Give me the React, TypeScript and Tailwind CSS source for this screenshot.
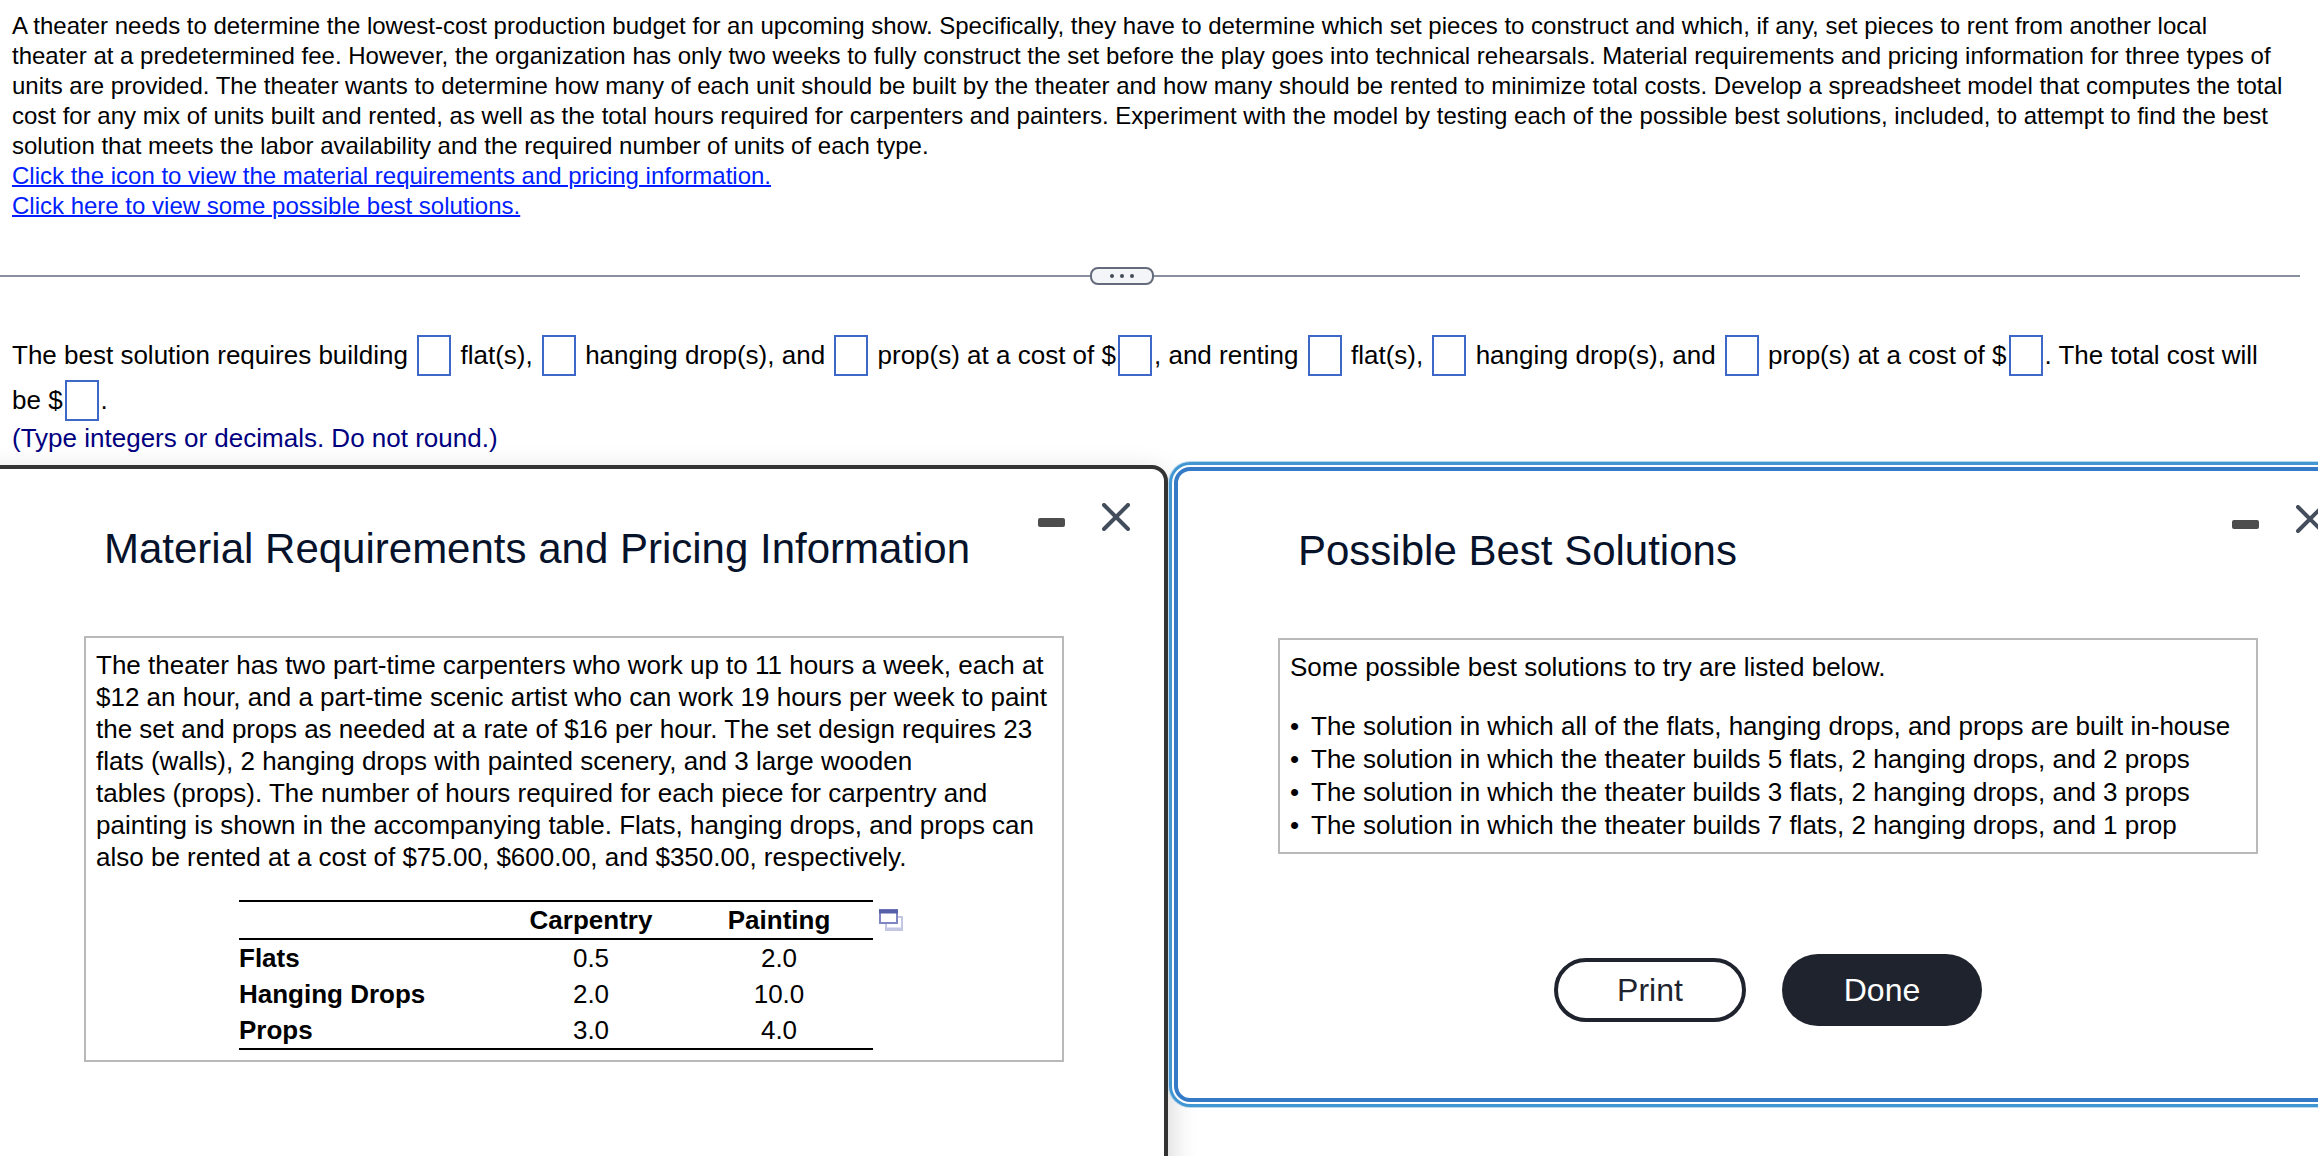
import React, { useState } from 'react';

const SOLUTIONS = [
    'The solution in which all of the flats, hanging drops, and props are built in-house',
    'The solution in which the theater builds 5 flats, 2 hanging drops, and 2 props',
    'The solution in which the theater builds 3 flats, 2 hanging drops, and 3 props',
    'The solution in which the theater builds 7 flats, 2 hanging drops, and 1 prop',
];

const HOURS = [
    { name: 'Flats', carpentry: '0.5', painting: '2.0' },
    { name: 'Hanging Drops', carpentry: '2.0', painting: '10.0' },
    { name: 'Props', carpentry: '3.0', painting: '4.0' },
];

const Blank: React.FC<{ label: string }> = ({ label }) => {
    const [value, setValue] = useState('');

    return (
        <input
            type="text"
            aria-label={label}
            className="mx-[2px] h-[41px] w-[34px] border-2 border-[#3d68c8] bg-white text-center outline-none"
            value={value}
            onChange={(e) => setValue(e.target.value)}
        />
    );
};

interface DialogProps {
    title: string;
    className: string;
    children: React.ReactNode;
}

const Dialog: React.FC<DialogProps> = ({ title, className, children }) => (
    <section role="dialog" aria-label={title} className={`w-[calc(50%+19px)] shrink-0 rounded-2xl border-4 bg-white ${className}`}>
        <header className="flex h-[167px] items-start justify-between pt-[34px] pr-[34px] pl-[120px]">
            <h2 className="mt-[22px] text-[42px] leading-[48px] text-[#07122b]">{title}</h2>
            <div className="flex gap-[37px]">
                <button type="button" aria-label="Minimize" className="flex h-[28px] w-[27px] items-center pt-[11px]">
                    <span className="h-[9px] w-full rounded-[2px] bg-[#4d4d4d]" />
                </button>
                <button type="button" aria-label="Close" className="h-[28px] w-[28px]">
                    <svg viewBox="0 0 28 28" className="h-full w-full" fill="none" stroke="#434d5b" strokeWidth="4" strokeLinecap="round">
                        <path d="M2 2 26 26M26 2 2 26" />
                    </svg>
                </button>
            </div>
        </header>
        <div className="px-[100px]">{children}</div>
    </section>
);

const HoursTable: React.FC = () => (
    <div className="mt-[27px] flex items-start justify-center">
        <table className="w-[634px] table-fixed border-separate border-spacing-0 leading-[36px]">
            <thead>
                <tr>
                    <td className="w-[258px] border-y-2 border-black p-0" />
                    <th scope="col" className="border-y-2 border-black p-0 text-center font-bold">Carpentry</th>
                    <th scope="col" className="border-y-2 border-black p-0 text-center font-bold">Painting</th>
                </tr>
            </thead>
            <tbody className="[&>tr:last-child>*]:border-b-2 [&>tr:last-child>*]:border-black">
                {HOURS.map((row) => (
                    <tr key={row.name}>
                        <th scope="row" className="p-0 text-left font-bold">{row.name}</th>
                        <td className="p-0 text-center">{row.carpentry}</td>
                        <td className="p-0 text-center">{row.painting}</td>
                    </tr>
                ))}
            </tbody>
        </table>
        <button type="button" aria-label="Open table in new window" className="mx-[6px] mt-[9px]">
            <svg viewBox="0 0 24 22" className="h-[22px] w-[24px]">
                <rect x="7" y="8" width="16" height="13" fill="#fff" stroke="#c3c7e4" strokeWidth="2" />
                <path d="M8 20h15" stroke="#c3c7e4" strokeWidth="3" />
                <rect x="1" y="1" width="17" height="13" fill="#fff" stroke="#7f86c2" strokeWidth="2" />
                <path d="M0 2.5h19" stroke="#5560a8" strokeWidth="4" />
            </svg>
        </button>
    </div>
);

export default function App() {
    return (
        <main className="flex h-screen flex-col overflow-hidden bg-white font-['Liberation_Sans',Arial,sans-serif] text-[26px] text-black">
            <div className="pt-[11px] pr-[30px] pl-[12px] text-[24px] leading-[30px]">
                <p>
                    A theater needs to determine the lowest-cost production budget for an upcoming show. Specifically, they have to
                    determine which set pieces to construct and which, if any, set pieces to rent from another local theater at a
                    predetermined fee. However, the organization has only two weeks to fully construct the set before the play goes into
                    technical rehearsals. Material requirements and pricing information for three types of units are provided. The theater
                    wants to determine how many of each unit should be built by the theater and how many should be rented to minimize
                    total costs. Develop a spreadsheet model that computes the total cost for any mix of units built and rented, as well
                    as the total hours required for carpenters and painters. Experiment with the model by testing each of the possible
                    best solutions, included, to attempt to find the best solution that meets the labor availability and the required
                    number of units of each type.
                </p>
                <a href="#materials" className="block w-fit text-[#001eff] underline decoration-2">
                    Click the icon to view the material requirements and pricing information.
                </a>
                <a href="#solutions" className="block w-fit text-[#001eff] underline decoration-2">
                    Click here to view some possible best solutions.
                </a>
            </div>

            {/* Divider with the expand handle */}
            <div className="mt-[46px] mr-[18px] flex items-center">
                <span className="h-[2px] w-[47.4%] bg-[#8a8fa0]" />
                <button
                    type="button"
                    aria-label="Expand"
                    className="flex h-[18px] w-[64px] items-center justify-center gap-[6px] rounded-lg border-2 border-[#636b7c] bg-[#f3f5f8]"
                >
                    <span className="size-[4px] rounded-full bg-[#444b57]" />
                    <span className="size-[4px] rounded-full bg-[#444b57]" />
                    <span className="size-[4px] rounded-full bg-[#444b57]" />
                </button>
                <span className="h-[2px] flex-1 bg-[#8a8fa0]" />
            </div>

            <div className="mt-[48px] pr-[30px] pl-[12px]">
                <p className="leading-[45px]">
                    The best solution requires building <Blank label="Flats built" /> flat(s), <Blank label="Hanging drops built" /> hanging
                    drop(s), and <Blank label="Props built" /> prop(s) at a cost of $<Blank label="Cost of building" />, and
                    renting <Blank label="Flats rented" /> flat(s), <Blank label="Hanging drops rented" /> hanging drop(s),
                    and <Blank label="Props rented" /> prop(s) at a cost of $<Blank label="Cost of renting" />. The total cost
                    will <span className="whitespace-nowrap">be $<Blank label="Total cost" />.</span>
                </p>
                <p className="leading-[30px] text-[#00007f]">(Type integers or decimals. Do not round.)</p>
            </div>

            <div className="mt-[12px] -ml-[20px] flex items-start gap-[6px]">
                <Dialog
                    title="Material Requirements and Pricing Information"
                    className="min-h-[800px] border-[#333333] shadow-[0_10px_30px_rgba(0,0,0,0.2)]"
                >
                    <div className="border-2 border-[#b9b9b9] px-[10px] pt-[11px] pb-[10px]">
                        <p className="leading-[32px]">
                            The theater has two part-time carpenters who work up to 11 hours a week, each at $12 an hour, and a part-time
                            scenic artist who can work 19 hours per week to paint the set and props as needed at a rate of $16 per hour. The
                            set design requires 23 flats (walls), 2 hanging drops with painted scenery, and 3 large wooden
                            <br />
                            tables (props). The number of hours required for each piece for carpentry and painting is shown in the
                            accompanying table. Flats, hanging drops, and props can also be rented at a cost of $75.00, $600.00, and $350.00,
                            respectively.
                        </p>
                        <HoursTable />
                    </div>
                </Dialog>

                <Dialog
                    title="Possible Best Solutions"
                    className="relative mt-[2px] border-[#357ac6] shadow-[0_0_0_2px_#ffffff,0_0_0_5px_#4297d3,0_0_0_6px_#b9d9ef]"
                >
                    <div className="border-2 border-[#b9b9b9] px-[10px] pt-[11px] pb-[10px]">
                        <p className="leading-[32px]">Some possible best solutions to try are listed below.</p>
                        <ul className="mt-[27px] leading-[33px]">
                            {SOLUTIONS.map((text) => (
                                <li key={text} className="flex">
                                    <span className="w-[21px] shrink-0">•</span>
                                    {text}
                                </li>
                            ))}
                        </ul>
                    </div>
                    <div className="mt-[100px] mb-[72px] flex items-center justify-center gap-[36px] text-[32px]">
                        <button type="button" className="h-[64px] w-[192px] rounded-full border-4 border-[#1f232e] text-[#1f232e]">
                            Print
                        </button>
                        <button type="button" className="h-[72px] w-[200px] rounded-full bg-[#1f232e] text-white">
                            Done
                        </button>
                    </div>
                </Dialog>
            </div>
        </main>
    );
}
